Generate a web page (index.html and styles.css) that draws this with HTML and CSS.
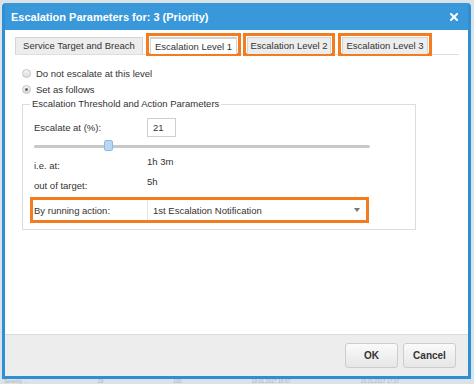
FILE: index.html
```html
<!DOCTYPE html>
<html>
<head>
  <title>Escalation Parameters</title>
  <link rel="stylesheet" href="styles.css">
</head>
<body>
  <div class="dialog">
    <div class="titlebar">
      <span class="title">Escalation Parameters for: 3 (Priority)</span>
      <svg class="close" width="8" height="8" viewBox="0 0 8 8">
        <path d="M1 1 L7 7 M7 1 L1 7" stroke="#fff" stroke-width="2" stroke-linecap="square"/>
      </svg>
    </div>

    <div class="content">
      <!-- tabs -->
      <div class="tabs">
        <div class="tab tab-first">Service Target and Breach</div>
        <div class="mark mark-1"><div class="tab active">Escalation Level 1</div></div>
        <div class="mark mark-2"><div class="tab">Escalation Level 2</div></div>
        <div class="mark mark-3"><div class="tab">Escalation Level 3</div></div>
      </div>

      <div class="radios">
        <div class="radio-row"><span class="radio"></span>Do not escalate at this level</div>
        <div class="radio-row"><span class="radio checked"></span>Set as follows</div>
      </div>

      <fieldset class="params">
        <legend>Escalation Threshold and Action Parameters</legend>

        <div class="row row-input">
          <span class="label">Escalate at (%):</span>
          <span class="input">21</span>
        </div>

        <div class="row row-slider">
          <div class="track"><span class="handle"></span></div>
        </div>

        <div class="row row-info">
          <span class="label">i.e. at:</span>
          <span class="value">1h 3m</span>
        </div>

        <div class="row row-info">
          <span class="label">out of target:</span>
          <span class="value">5h</span>
        </div>

        <div class="row row-action">
          <span class="label">By running action:</span>
          <div class="select">
            <span>1st Escalation Notification</span>
            <span class="arrow"></span>
          </div>
        </div>
      </fieldset>
    </div>

    <div class="footer">
      <button class="btn">OK</button>
      <button class="btn">Cancel</button>
    </div>
  </div>

  <div class="behind">
    <span>Severity ...</span>
    <span>29</span>
    <span>100</span>
    <span>19.01.2017 16:57</span>
    <span>15.01.2017 17:07</span>
  </div>
</body>
</html>
```

FILE: styles.css
```css
body {
  margin: 0;
  height: 384px;
  overflow: hidden;
  background-color: #dbe2e8;
  font-family: "Liberation Sans", Arial, sans-serif;
  font-size: 9.5px;
  color: #333;
}

.dialog {
  box-sizing: border-box;
  width: 469px;
  height: 376px;
  margin: 3px 0 0 2px;
  padding: 0 3px 3px 3px;
  background-color: #2d90d6;
  border-radius: 4px 4px 0 0;
  display: flex;
  flex-direction: column;
}

.titlebar {
  height: 27px;
  display: flex;
  align-items: center;
  justify-content: space-between;
  padding: 0 10px 0 6px;
  background-color: #3898da;
}

.title {
  color: #fff;
  font-weight: bold;
  font-size: 11px;
}

.content {
  flex: 1;
  background-color: #fff;
  padding: 3px 9px 0 10px;
}

/* tabs */
.tabs {
  height: 21px;
  display: flex;
  align-items: flex-end;
  border-bottom: 1px solid #dedede;
}

.tab {
  box-sizing: border-box;
  height: 17px;
  line-height: 16px;
  text-align: center;
  background-color: #ededed;
  border: 1px solid #d4d4d4;
  border-bottom: none;
  white-space: nowrap;
}

.tab-first {
  width: 128px;
}

.tab.active {
  background-color: #fff;
  border-top: 2px solid #d0d0d0;
}

.mark {
  box-sizing: border-box;
  height: 23px;
  margin-bottom: -2px;
  border: 3px solid #f47c20;
  padding: 0 1px 0 1px;
  display: flex;
  align-items: flex-start;
}

.mark .tab {
  width: 100%;
  margin-top: 1px;
}

.mark-1 {
  width: 95px;
  margin-left: 3px;
}

.mark-2 {
  width: 92px;
  margin-left: 2px;
}

.mark-3 {
  width: 94px;
  margin-left: 3px;
}

/* radios */
.radios {
  padding: 10px 0 0 7px;
}

.radio-row {
  height: 16px;
  display: flex;
  align-items: center;
}

.radio {
  box-sizing: border-box;
  width: 9px;
  height: 9px;
  margin-right: 5px;
  border: 1px solid #c4c4c4;
  border-radius: 50%;
  background: linear-gradient(#f6f6f6, #dcdcdc);
  display: flex;
  align-items: center;
  justify-content: center;
}

.radio.checked::after {
  content: "";
  width: 3px;
  height: 3px;
  border-radius: 50%;
  background-color: #666;
}

/* fieldset */
.params {
  box-sizing: border-box;
  width: 394px;
  margin: 1px 0 0 7px;
  padding: 0 0 6px 11px;
  border: 1px solid #dddddd;
}

.params legend {
  margin-left: -4px;
  padding: 0 2px;
  line-height: 12px;
}

.row {
  display: flex;
}

.label {
  width: 113px;
  flex-shrink: 0;
}

.row-input {
  margin-top: 8px;
  height: 19px;
  align-items: center;
}

.input {
  box-sizing: border-box;
  width: 29px;
  height: 19px;
  padding-left: 5px;
  line-height: 17px;
  border: 1px solid #cfcfcf;
}

.row-slider {
  height: 19px;
  align-items: center;
}

.track {
  position: relative;
  width: 336px;
  height: 3px;
  border-radius: 2px;
  background-color: #c8c8c8;
}

.handle {
  position: absolute;
  left: 70px;
  top: -5px;
  box-sizing: border-box;
  width: 9px;
  height: 11px;
  border: 1px solid #8fbbe8;
  border-radius: 2px;
  background-color: #b9d7f5;
}

.row-info {
  height: 20px;
  align-items: flex-start;
}

.row-info .label {
  padding-top: 4px;
}

.row-action {
  box-sizing: border-box;
  width: 339px;
  height: 26px;
  margin: 1px 0 0 -4px;
  padding-left: 1px;
  border: 3px solid #f47c20;
  align-items: center;
}

.select {
  box-sizing: border-box;
  flex: 1;
  height: 20px;
  padding: 0 6px 0 5px;
  border-left: 1px solid #e4e4e4;
  display: flex;
  align-items: center;
  justify-content: space-between;
}

.arrow {
  width: 0;
  height: 0;
  border-left: 3px solid transparent;
  border-right: 3px solid transparent;
  border-top: 4px solid #777;
}

/* footer */
.footer {
  height: 41px;
  border-top: 1px solid #dcdcdc;
  background-color: #ededed;
  display: flex;
  justify-content: flex-end;
  align-items: center;
  gap: 5px;
  padding-right: 12px;
}

.btn {
  width: 53px;
  height: 25px;
  font-family: "Liberation Sans", Arial, sans-serif;
  font-size: 10px;
  font-weight: bold;
  color: #333;
  border: 1px solid #cdcdcd;
  border-radius: 3px;
  background: linear-gradient(#fafafa, #e6e6e6);
}

/* page behind the dialog, only a sliver shows */
.behind {
  display: flex;
  gap: 70px;
  padding: 0 0 0 4px;
  height: 5px;
  line-height: 5px;
  color: #b5b5b5;
  font-size: 5px;
}
```
